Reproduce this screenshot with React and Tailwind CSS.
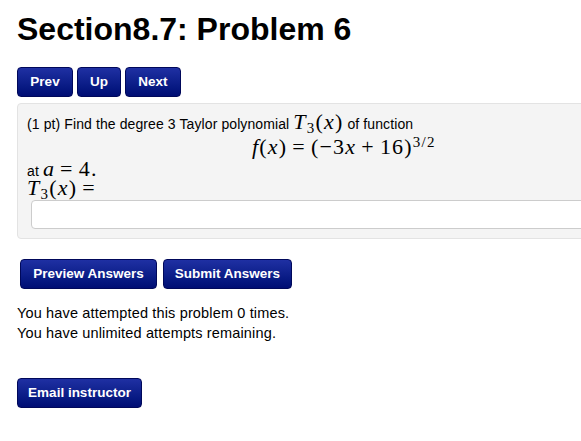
import React from "react";

const btn =
  "rounded-[4px] border border-[#00085a] bg-gradient-to-b from-[#1f30a3] to-[#000d74] text-[13.5px] font-bold text-white h-[30px] leading-none";

const M = ({ children, className = "" }) => (
  <span
    className={`font-['Liberation_Serif',serif] text-[22px] leading-[0] tracking-[1.2px] ${className}`}
  >
    {children}
  </span>
);

const Op = ({ children }) => <span className="mx-[5px]">{children}</span>;

const App = () => {
  return (
    <div className="min-h-[441px] w-[581px] overflow-hidden bg-white font-['Liberation_Sans',Arial,sans-serif] text-black">
      <div className="pl-[17px] pt-[10px]">
        <h1 className="text-[32px] font-bold leading-[38px]">Section8.7: Problem 6</h1>

        <div className="mt-[19px] flex gap-[4px]">
          <button className={`${btn} w-[56px]`}>Prev</button>
          <button className={`${btn} w-[44px]`}>Up</button>
          <button className={`${btn} w-[56px]`}>Next</button>
        </div>

        <div className="mt-[6px] -mr-[10px] rounded-[4px] border border-[#e3e3e3] bg-[#f4f4f4] pb-[9px] pl-[9px] pr-[20px] pt-[10px] text-[14px] leading-[20px] tracking-[0.1px]">
          <div className="h-[25px] whitespace-nowrap">
            (1 pt) Find the degree 3 Taylor polynomial{" "}
            <M className="tracking-[0.8px]">
              <i>T</i>
              <sub className="text-[15px]">3</sub>(<i>x</i>)
            </M>{" "}
            of function
          </div>
          <div className="h-[22px] whitespace-nowrap pl-[225px]">
            <M>
              <i>f</i>(<i>x</i>)<Op>=</Op>(−3<i>x</i>
              <Op>+</Op>16)
              <sup className="text-[15px]">3/2</sup>
            </M>
          </div>
          <div className="h-[19px]">
            at{" "}
            <M>
              <i>a</i>
              <Op>=</Op>4.
            </M>
          </div>
          <div className="h-[20px]">
            <M className="tracking-[0.8px]">
              <i>T</i>
              <sub className="text-[15px]">3</sub>(<i>x</i>)<Op>=</Op>
            </M>
          </div>
          <input
            type="text"
            className="ml-[4px] block h-[29px] w-[600px] rounded-[4px] border border-[#cccccc] bg-white"
          />
        </div>

        <div className="mt-[20px] flex gap-[6px] pl-[3px]">
          <button className={`${btn} w-[137px]`}>Preview Answers</button>
          <button className={`${btn} w-[129px]`}>Submit Answers</button>
        </div>

        <div className="mt-[14px] text-[14.5px] leading-[20px] tracking-[0.15px]">
          <p>You have attempted this problem 0 times.</p>
          <p>You have unlimited attempts remaining.</p>
        </div>

        <button className={`${btn} mt-[35px] w-[125px]`}>Email instructor</button>
      </div>
    </div>
  );
};

export default App;
